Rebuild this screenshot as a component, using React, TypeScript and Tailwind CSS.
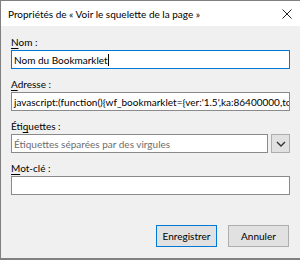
import React from "react";

const font = { fontFamily: 'Lato, "Noto Sans", sans-serif' };

const Field = ({
  children,
  focused = false,
  className = "",
}: {
  children?: React.ReactNode;
  focused?: boolean;
  className?: string;
}) => (
  <div
    className={`h-[19px] bg-white border flex items-center pl-[2px] overflow-hidden whitespace-nowrap ${
      focused ? "border-[#0078d7]" : "border-[#8a8a8a]"
    } ${className}`}
  >
    {children}
  </div>
);

const Label = ({ pre = "", acc, post }: { pre?: string; acc: string; post: string }) => (
  <div className="h-[16px] flex items-center text-black">
    <span>
      {pre}
      <span className="underline underline-offset-2">{acc}</span>
      {post}
    </span>
  </div>
);

export default function App() {
  return (
    <div
      className="w-[300px] h-[260px] flex flex-col border-l border-t border-b-2 border-[#808080] bg-[#f0f0f0] text-[10px] leading-none"
      style={font}
    >
      <div className="h-[25px] bg-white flex items-center justify-between pl-[7px] pr-[7px] shrink-0">
        <span className="text-black">Propriétés de « Voir le squelette de la page »</span>
        <svg width="10" height="10" viewBox="0 0 10 10" className="mr-[1px]">
          <path d="M0.5 0.5 L9.5 9.5 M9.5 0.5 L0.5 9.5" stroke="#222" strokeWidth="1" />
        </svg>
      </div>

      <div className="flex flex-col pl-[10px] pr-[10px] pt-[8px]">
        <Label acc="N" post="om :" />
        <Field focused>
          <span className="text-black">Nom du Bookmarklet</span>
          <span className="w-px h-[12px] bg-black" />
        </Field>

        <div className="mt-[7px]">
          <Label acc="A" post="dresse :" />
        </div>
        <Field>
          <span className="text-black">
            javascript:(function(){"{"}wf_bookmarklet={"{"}ver:'1.5',ka:86400000,tc
          </span>
        </Field>

        <div className="mt-[7px]">
          <Label pre="Éti" acc="q" post="uettes :" />
        </div>
        <div className="flex gap-[3px]">
          <Field className="flex-1">
            <span className="text-[#6d6d6d]">Étiquettes séparées par des virgules</span>
          </Field>
          <div className="w-[19px] h-[19px] bg-[#e1e1e1] border border-[#adadad] flex items-center justify-center">
            <svg width="10" height="6" viewBox="0 0 10 6">
              <path d="M1 1 L5 5 L9 1" fill="none" stroke="#333" strokeWidth="1.4" />
            </svg>
          </div>
        </div>

        <div className="mt-[7px]">
          <Label acc="M" post="ot-clé :" />
        </div>
        <Field />

        <div className="flex justify-end gap-[11px] mt-[30px] pr-[1px]">
          <button className="w-[61px] h-[22px] bg-[#e1e1e1] border border-[#0078d7] text-black">
            Enregistrer
          </button>
          <button className="w-[61px] h-[22px] bg-[#e1e1e1] border border-[#adadad] text-black">
            Annuler
          </button>
        </div>
      </div>
    </div>
  );
}
